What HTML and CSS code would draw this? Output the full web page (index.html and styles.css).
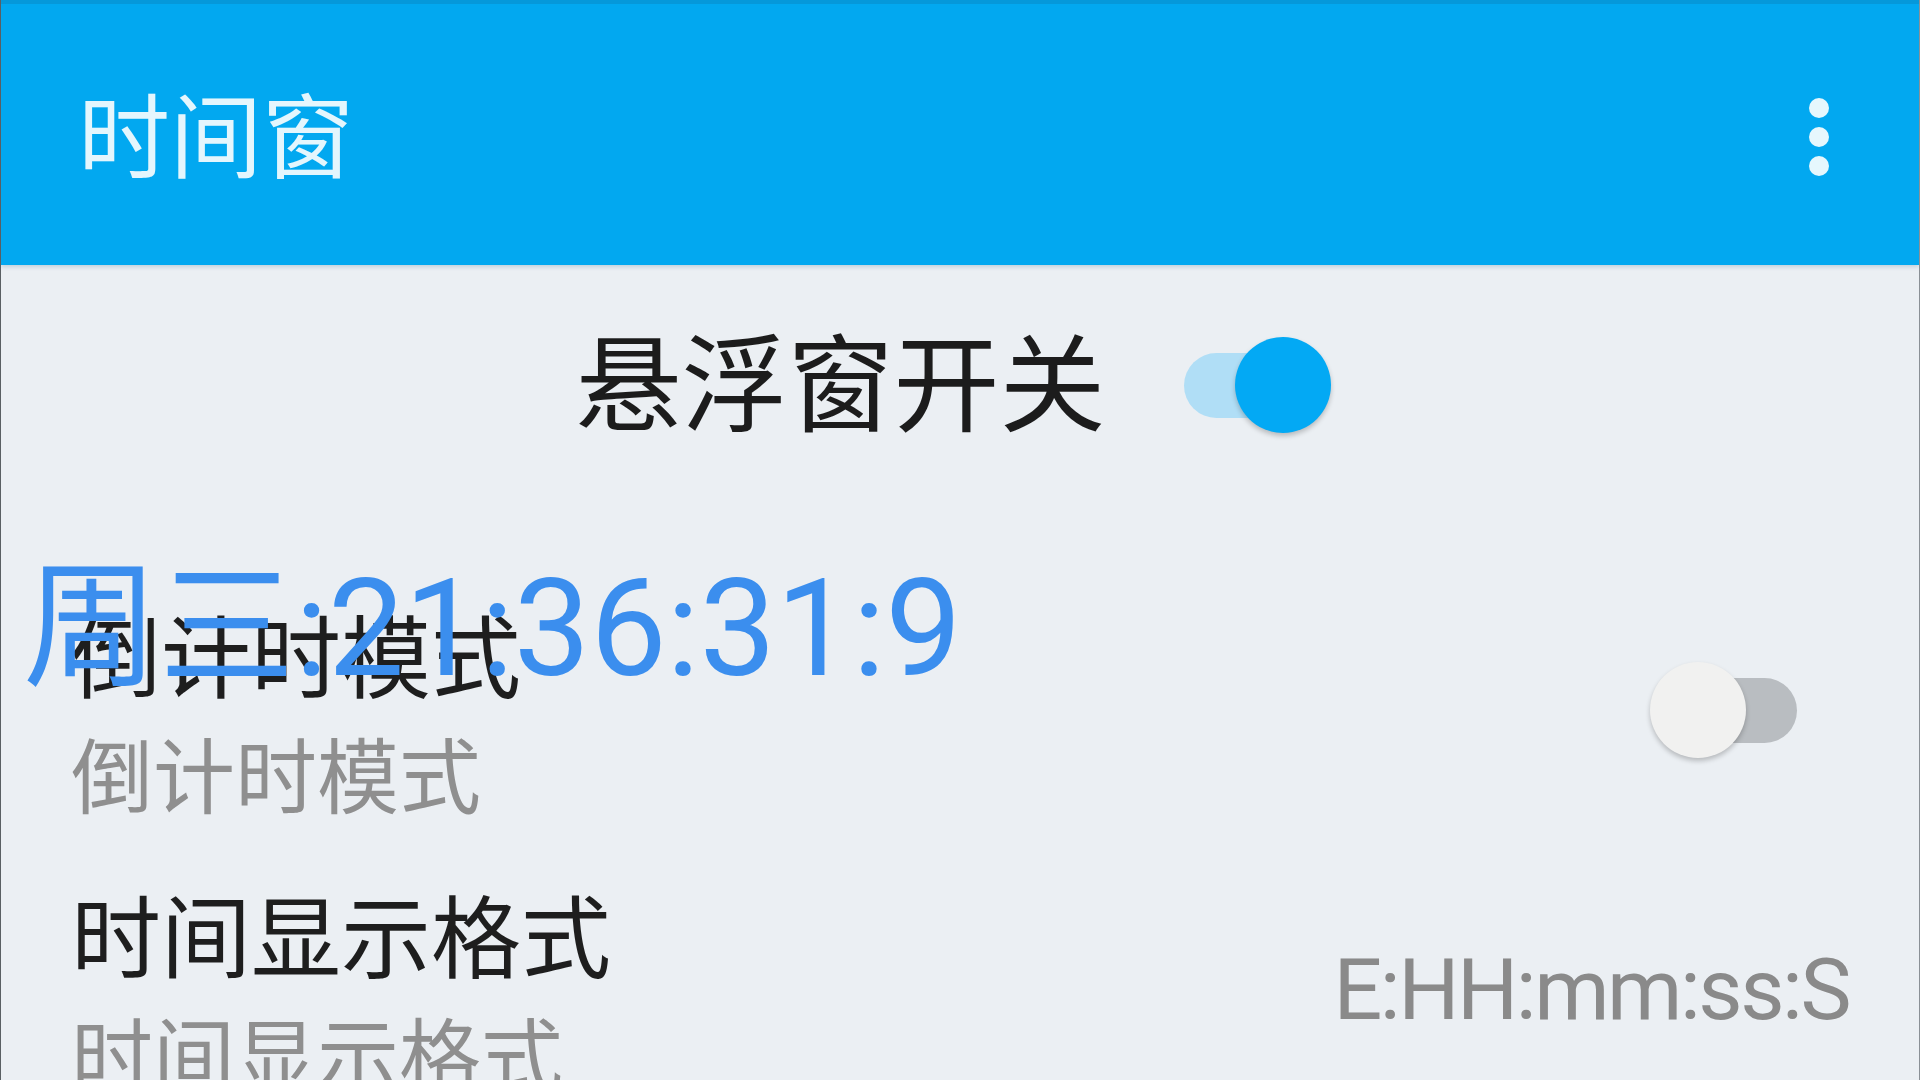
FILE: index.html
```html
<!DOCTYPE html>
<html lang="zh-CN">
<head>
<meta charset="utf-8">
<title>时间窗</title>
<link rel="stylesheet" href="styles.css">
</head>
<body>
<div class="screen">
  <header class="appbar">
    <h1 class="appbar-title">时间窗</h1>
    <button class="overflow" aria-label="更多选项">
      <span class="dot"></span><span class="dot"></span><span class="dot"></span>
    </button>
  </header>
  <main class="content">
    <div class="master-row">
      <span class="master-label">悬浮窗开关</span>
      <span class="switch switch-on"><span class="track"></span><span class="thumb"></span></span>
    </div>
    <div class="pref-list">
      <div class="pref-row">
        <div class="pref-text">
          <div class="pref-title">倒计时模式</div>
          <div class="pref-summary">倒计时模式</div>
        </div>
        <span class="switch switch-off"><span class="track"></span><span class="thumb"></span></span>
      </div>
      <div class="pref-row">
        <div class="pref-text">
          <div class="pref-title">时间显示格式</div>
          <div class="pref-summary">时间显示格式</div>
        </div>
        <div class="pref-value">E:HH:mm:ss:S</div>
      </div>
    </div>
  </main>
  <div class="floating-clock">周三:21:36:31:9</div>
</div>
</body>
</html>
```
FILE: styles.css
```css
* { box-sizing: border-box; }
html, body { margin: 0; padding: 0; }
body {
  width: 1920px;
  height: 1080px;
  overflow: hidden;
  background: #ebeff3;
  font-family: "Noto Sans CJK SC", "Noto Sans", sans-serif;
}
.screen {
  position: relative;
  width: 1920px;
  height: 1080px;
  overflow: hidden;
  border-left: 1px solid #5a5f63;
  border-right: 1px solid #8a9096;
}
.appbar {
  height: 265px;
  background: #02a8f0;
  border-top: 4px solid #0598da;
  display: flex;
  align-items: center;
  justify-content: space-between;
  padding: 0 0 8px 77px;
  box-shadow: 0 2px 4px rgba(0, 80, 120, 0.18);
  position: relative;
  z-index: 1;
}
.appbar-title {
  margin: 0;
  font-size: 92px;
  line-height: 1;
  font-weight: 400;
  color: #e4f6fd;
}
.overflow {
  width: 120px;
  height: 120px;
  margin: 12px 40px 0 0;
  border: 0;
  background: transparent;
  display: flex;
  flex-direction: column;
  align-items: center;
  justify-content: center;
  gap: 9px;
  padding: 0;
}
.dot {
  width: 20px;
  height: 20px;
  border-radius: 50%;
  background: #e6f7fd;
}
.content {
  display: flex;
  flex-direction: column;
}
.master-row {
  height: 240px;
  display: flex;
  align-items: center;
  justify-content: center;
  gap: 78px;
  padding-right: 14px;
}
.master-label {
  font-size: 106px;
  line-height: 1;
  color: #1c1c1c;
  padding-bottom: 16px;
}
.switch {
  position: relative;
  display: inline-block;
  width: 147px;
  height: 96px;
  flex: none;
}
.switch .track {
  position: absolute;
  top: 16px;
  height: 65px;
  width: 125px;
  border-radius: 33px;
}
.switch .thumb {
  position: absolute;
  top: 0;
  width: 96px;
  height: 96px;
  border-radius: 50%;
  box-shadow: 0 3px 5px rgba(0, 0, 0, 0.22);
}
.switch-on .track { left: 0; background: #b0def6; }
.switch-on .thumb { right: 0; background: #03a9f4; }
.switch-off .track { right: 0; background: #b9bdc1; }
.switch-off .thumb { left: 0; background: #f1f1f0; }

.pref-list {
  padding-top: 65px;
  display: flex;
  flex-direction: column;
}
.pref-row {
  height: 280px;
  display: flex;
  align-items: center;
  justify-content: space-between;
  padding: 0 70px 0 70px;
}
.pref-text {
  display: flex;
  flex-direction: column;
  gap: 34px;
}
.pref-title {
  font-size: 90px;
  line-height: 1;
  color: #1e1e1e;
}
.pref-summary {
  font-size: 82px;
  line-height: 1;
  color: #8f8f8f;
}
.switch-off { margin-right: 52px; }
.pref-value {
  font-family: Roboto, "Noto Sans", sans-serif;
  font-size: 86px;
  line-height: 1;
  letter-spacing: -2.5px;
  color: #8a8a8a;
  margin-left: -6px;
}
.floating-clock {
  position: absolute;
  left: 22px;
  top: 561px;
  font-family: Roboto, "Noto Sans CJK SC", sans-serif;
  font-size: 136px;
  line-height: 1;
  color: #3b8eee;
  white-space: nowrap;
  z-index: 2;
}
```
